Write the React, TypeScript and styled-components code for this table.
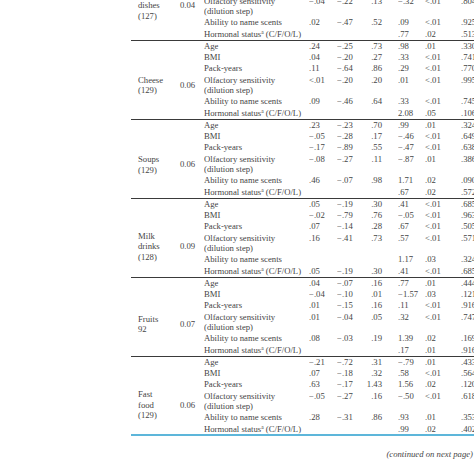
import React from 'react';
import styled, {createGlobalStyle} from 'styled-components';

const GlobalStyle = createGlobalStyle`
  html, body {
    margin: 0;
    padding: 0;
    background: #fff;
  }
`;

const Page = styled.div`
  width: 474px;
  height: 474px;
  overflow: hidden;
  box-sizing: border-box;
  padding-left: 131px;
  font-family: "Liberation Serif", "Times New Roman", serif;
  font-size: 8.7px;
  color: #454545;
`;

const Table = styled.table`
  width: 370px;
  table-layout: fixed;
  border-collapse: collapse;
  margin-top: -39px;
`;

const Col = styled.col<{$w: number}>`
  width: ${(p) => p.$w}px;
`;

const Group = styled.tbody<{$last?: boolean}>`
  border-bottom: ${(p) => (p.$last ? '2px solid #5db6da' : '1px solid #3a3a3a')};
`;

const Row = styled.tr<{$h: number}>`
  height: ${(p) => p.$h}px;
`;

const Cell = styled.td<{$right?: number}>`
  padding: 0 ${(p) => p.$right ?? 0}px 0 0;
  text-align: ${(p) => (p.$right ? 'right' : 'left')};
  line-height: 10px;
  vertical-align: top;
  white-space: nowrap;
  overflow: hidden;
`;

// labels sit roughly centred on the "Olfactory sensitivity" row
const LabelCell = styled.td<{$pad: number; $top: number}>`
  padding: ${(p) => p.$top}px 0 0 ${(p) => p.$pad}px;
  line-height: 10.5px;
  vertical-align: top;
`;

const Sup = styled.sup`
  font-size: 5.5px;
  line-height: 0;
  vertical-align: 3px;
`;

const Note = styled.div`
  margin-top: 13px;
  padding-right: 1px;
  text-align: right;
  font-style: italic;
  line-height: 10px;
`;

type Vals = [string, string, string, string, string, string];

const VARS = ['Age', 'BMI', 'Pack-years', 'olf', 'Ability to name scents', 'horm'];
const HEIGHTS = [12, 11, 12, 21, 12, 11];
const COLS = [45, 28, 105, 28, 29, 32, 27, 36, 40];

const groups: {label: string[]; r2: string; shift: number; rows: Vals[]}[] = [
  {
    label: ['Meat', 'dishes', '(127)'],
    r2: '0.04',
    shift: 1,
    rows: [
      ['.12', '−.31', '.55', '.60', '<.01', '.552'],
      ['.03', '−.19', '.25', '.27', '<.01', '.789'],
      ['.05', '−.62', '.72', '.14', '<.01', '.889'],
      ['−.04', '−.22', '.13', '−.32', '<.01', '.804'],
      ['.02', '−.47', '.52', '.09', '<.01', '.925'],
      ['', '', '', '.77', '.02', '.513'],
    ],
  },
  {
    label: ['Cheese', '(129)'],
    r2: '0.06',
    shift: 1,
    rows: [
      ['.24', '−.25', '.73', '.98', '.01', '.330'],
      ['.04', '−.20', '.27', '.33', '<.01', '.741'],
      ['.11', '−.64', '.86', '.29', '<.01', '.770'],
      ['<.01', '−.20', '.20', '.01', '<.01', '.995'],
      ['.09', '−.46', '.64', '.33', '<.01', '.745'],
      ['', '', '', '2.08', '.05', '.106'],
    ],
  },
  {
    label: ['Soups', '(129)'],
    r2: '0.06',
    shift: 1.5,
    rows: [
      ['.23', '−.23', '.70', '.99', '.01', '.324'],
      ['−.05', '−.28', '.17', '−.46', '<.01', '.649'],
      ['−.17', '−.89', '.55', '−.47', '<.01', '.638'],
      ['−.08', '−.27', '.11', '−.87', '.01', '.386'],
      ['.46', '−.07', '.98', '1.71', '.02', '.090'],
      ['', '', '', '.67', '.02', '.572'],
    ],
  },
  {
    label: ['Milk', 'drinks', '(128)'],
    r2: '0.09',
    shift: 4.5,
    rows: [
      ['.05', '−.19', '.30', '.41', '<.01', '.685'],
      ['−.02', '−.79', '.76', '−.05', '<.01', '.963'],
      ['.07', '−.14', '.28', '.67', '<.01', '.505'],
      ['.16', '−.41', '.73', '.57', '<.01', '.571'],
      ['', '', '', '1.17', '.03', '.324'],
      ['.05', '−.19', '.30', '.41', '<.01', '.685'],
    ],
  },
  {
    label: ['Fruits', '92'],
    r2: '0.07',
    shift: 3,
    rows: [
      ['.04', '−.07', '.16', '.77', '.01', '.444'],
      ['−.04', '−.10', '.01', '−1.57', '.03', '.121'],
      ['.01', '−.15', '.16', '.11', '<.01', '.916'],
      ['.01', '−.04', '.05', '.32', '<.01', '.747'],
      ['.08', '−.03', '.19', '1.39', '.02', '.169'],
      ['', '', '', '.17', '.01', '.916'],
    ],
  },
  {
    label: ['Fast', 'food', '(129)'],
    r2: '0.06',
    shift: 5,
    rows: [
      ['−.21', '−.72', '.31', '−.79', '.01', '.433'],
      ['.07', '−.18', '.32', '.58', '<.01', '.564'],
      ['.63', '−.17', '1.43', '1.56', '.02', '.120'],
      ['−.05', '−.27', '.16', '−.50', '<.01', '.618'],
      ['.28', '−.31', '.86', '.93', '.01', '.353'],
      ['', '', '', '.99', '.02', '.402'],
    ],
  },
];

const VarName = ({name}: {name: string}) => {
  if (name === 'olf') {
    return (
      <>
        Olfactory sensitivity
        <br />
        (dilution step)
      </>
    );
  }
  if (name === 'horm') {
    return (
      <>
        Hormonal status<Sup>a</Sup> (C/F/O/L)
      </>
    );
  }
  return <>{name}</>;
};

const CENTER = 43.5;

const App = () => {
  return (
    <>
      <GlobalStyle />
      <Page>
        <Table>
          <colgroup>
            {COLS.map((w, i) => (
              <Col key={i} $w={w} />
            ))}
          </colgroup>
          {groups.map((g, gi) => (
            <Group key={gi} $last={gi === groups.length - 1}>
              {g.rows.map((r, ri) => (
                <Row key={ri} $h={HEIGHTS[ri]}>
                  {ri === 0 && (
                    <>
                      <LabelCell
                        $pad={7}
                        $top={CENTER + g.shift - (g.label.length * 10.5) / 2}
                        rowSpan={6}
                      >
                        {g.label.map((l, li) => (
                          <div key={li}>{l}</div>
                        ))}
                      </LabelCell>
                      <LabelCell $pad={4} $top={CENTER + g.shift - 5.25} rowSpan={6}>
                        {g.r2}
                      </LabelCell>
                    </>
                  )}
                  <Cell>
                    <VarName name={VARS[ri]} />
                  </Cell>
                  <Cell>{r[0]}</Cell>
                  <Cell>{r[1]}</Cell>
                  <Cell $right={16}>{r[2]}</Cell>
                  <Cell>{r[3]}</Cell>
                  <Cell>{r[4]}</Cell>
                  <Cell>{r[5]}</Cell>
                </Row>
              ))}
            </Group>
          ))}
        </Table>
        <Note>(continued on next page)</Note>
      </Page>
    </>
  );
};

export default App;
